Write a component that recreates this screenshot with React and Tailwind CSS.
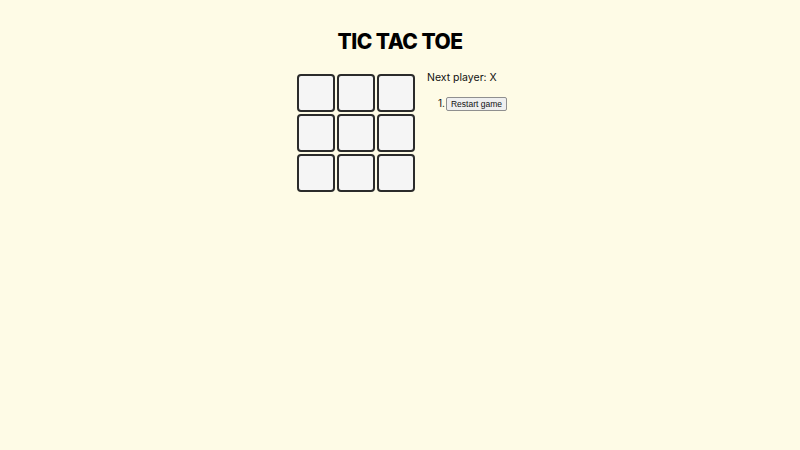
import React, { useState } from "react";

const Square = ({ value, onClick }) => (
  <button
    onClick={onClick}
    className="w-[38px] h-[38px] bg-[#f5f5f5] border-2 border-[#2b2b2b] rounded-[4px] text-xl font-bold leading-none"
  >
    {value}
  </button>
);

const App = () => {
  const [squares, setSquares] = useState(Array(9).fill(null));
  const [xIsNext, setXIsNext] = useState(true);

  const handleClick = (i) => {
    if (squares[i]) return;
    const next = squares.slice();
    next[i] = xIsNext ? "X" : "O";
    setSquares(next);
    setXIsNext(!xIsNext);
  };

  const restart = () => {
    setSquares(Array(9).fill(null));
    setXIsNext(true);
  };

  return (
    <div
      className="min-h-screen bg-[#fefbe6] text-black flex flex-col items-center"
      style={{ fontFamily: "Inter, 'Noto Sans', sans-serif" }}
    >
      <h1 className="mt-[29px] text-[21px] font-extrabold tracking-tight leading-[26px]">
        TIC TAC TOE
      </h1>
      <div className="flex mt-[19px] ml-[4px]">
        <div className="grid grid-cols-3 gap-[2px]">
          {squares.map((sq, i) => (
            <Square key={i} value={sq} onClick={() => handleClick(i)} />
          ))}
        </div>
        <div className="ml-[12px]">
          <p className="text-[10.5px] leading-[16px] -mt-[4px] text-[#111]">
            Next player: {xIsNext ? "X" : "O"}
          </p>
          <ol className="pl-[11px] mt-[11px] text-[10px] text-[#111]">
            <li className="flex items-start">
              <span className="leading-[12px] mr-[1px]">1.</span>
              <button
                onClick={restart}
                className="px-[4px] py-[1px] bg-[#efefef] border border-[#8f8f8f] rounded-[2px] text-[8.5px] leading-[10px]"
                style={{ fontFamily: "'Liberation Sans', Arial, sans-serif" }}
              >
                Restart game
              </button>
            </li>
          </ol>
        </div>
      </div>
    </div>
  );
};

export default App;
